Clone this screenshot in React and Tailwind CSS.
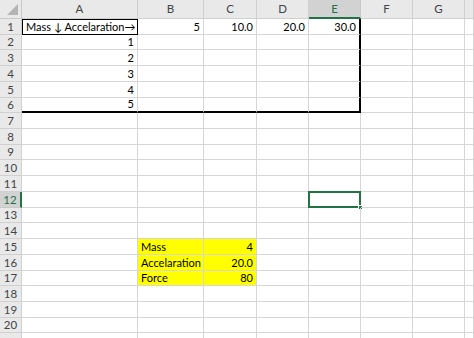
const cols = ["A", "B", "C", "D", "E", "F", "G", ""];
const rowCount = 21;

const cells = {
    A1: { v: "Mass ↓ Accelaration→", left: true },
    B1: { v: "5" },
    C1: { v: "10.0" },
    D1: { v: "20.0" },
    E1: { v: "30.0" },
    A2: { v: "1" },
    A3: { v: "2" },
    A4: { v: "3" },
    A5: { v: "4" },
    A6: { v: "5" },
    B15: { v: "Mass", left: true, fill: true },
    C15: { v: "4", fill: true },
    B16: { v: "Accelaration", left: true, fill: true },
    C16: { v: "20.0", fill: true },
    B17: { v: "Force", left: true, fill: true },
    C17: { v: "80", fill: true },
};

const Cell = ({ col, row }) => {
    const key = col + row;
    const cell = cells[key];
    const inRange = row <= 6 && ["A", "B", "C", "D", "E"].includes(col);
    const selected = key === "E12";

    let cls = "relative flex items-end px-[3px] border-r border-b border-[#d6d6d6] overflow-visible whitespace-nowrap text-[11px] leading-[14px] text-black";
    if (cell && cell.left) cls += " justify-start";
    else cls += " justify-end";
    if (cell && cell.fill) cls += " bg-[#ffff00]";
    if (key === "A1") cls += " border border-black px-[2px]";
    if (inRange && col === "E") cls += " border-r-2 border-r-black";
    if (inRange && row === 6) cls += " border-b-2 border-b-black";

    return (
        <div className={cls}>
            {cell && <span>{cell.v}</span>}
            {selected && (
                <>
                    <div className="absolute -left-px -top-px -right-px -bottom-px border-2 border-[#217346]" />
                    <div className="absolute -right-[3px] -bottom-[3px] w-[5px] h-[5px] bg-[#217346] border border-white" />
                </>
            )}
        </div>
    );
};

const App = () => {
    const rows = Array.from({ length: rowCount }, (_, i) => i + 1);

    return (
        <div
            className="w-[474px] h-[338px] overflow-hidden bg-white"
            style={{ fontFamily: "Lato, 'Liberation Sans', 'DejaVu Sans', sans-serif" }}
        >
            <div className="grid grid-cols-[22px_116px_66px_53px_52px_52px_52px_52px_1fr] grid-rows-[19px_repeat(21,15.73px)]">
                {/* corner */}
                <div className="relative bg-[#e9e9e9] border-r border-b border-[#c8c8c8]">
                    <div className="absolute right-[3px] bottom-[3px] w-0 h-0 border-l-[11px] border-l-transparent border-b-[11px] border-b-[#b4b4b4]" />
                </div>
                {cols.map((c, i) => (
                    <div
                        key={"h" + i}
                        className={
                            c === "E"
                                ? "flex items-center justify-center bg-[#d2d2d2] border-r border-[#c8c8c8] border-b-2 border-b-[#217346] text-[11.5px] text-[#217346]"
                                : "flex items-center justify-center bg-[#e9e9e9] border-r border-b border-[#d0d0d0] text-[11.5px] text-[#444]"
                        }
                    >
                        {c}
                    </div>
                ))}
                {rows.map((r) => (
                    <div key={"r" + r} className="contents">
                        <div
                            className={
                                r === 12
                                    ? "flex items-center justify-center bg-[#d2d2d2] border-b border-[#c8c8c8] border-r-2 border-r-[#217346] text-[11.5px] text-[#217346]"
                                    : "flex items-center justify-center bg-[#e9e9e9] border-r border-b border-[#d0d0d0] text-[11.5px] text-[#444]"
                            }
                        >
                            {r <= 20 ? r : ""}
                        </div>
                        {cols.map((c, i) => (
                            <Cell key={i} col={c || "H"} row={r} />
                        ))}
                    </div>
                ))}
            </div>
        </div>
    );
};

export default App;
